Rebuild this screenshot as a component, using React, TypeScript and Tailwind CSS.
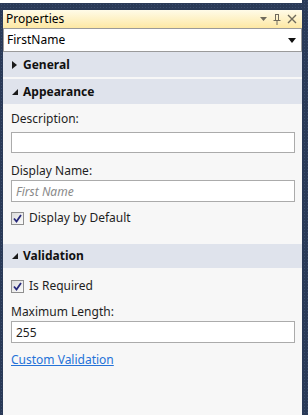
import React from 'react';

const font = { fontFamily: '"Noto Sans", "Open Sans", sans-serif' };

const Check: React.FC = () => (
    <span className="inline-flex h-[13px] w-[13px] items-center justify-center border border-[#8f8f8f] bg-gradient-to-br from-[#dcdcdc] to-[#fbfbfb]">
        <svg width="9" height="9" viewBox="0 0 9 9">
            <path d="M1 4.5 L3.5 7.5 L8 1" fill="none" stroke="#26287a" strokeWidth="1.8" />
        </svg>
    </span>
);

const SectionHeader: React.FC<{ title: string; open?: boolean; h?: string }> = ({ title, open, h = 'h-[25px]' }) => (
    <div className={`flex items-center bg-[#dfe3ec] pl-[6px] ${h}`}>
        <span className="flex w-[11px] items-center justify-center">
            {open ? (
                <svg width="6" height="6" viewBox="0 0 6 6">
                    <path d="M0 6 L6 6 L6 0 Z" fill="#1a1a1a" />
                </svg>
            ) : (
                <svg width="5" height="8" viewBox="0 0 5 8">
                    <path d="M0 0 L5 4 L0 8 Z" fill="#1a1a1a" />
                </svg>
            )}
        </span>
        <span className="ml-[3px] text-[12px] font-bold text-[#111]">{title}</span>
    </div>
);

const App: React.FC = () => {
    const [desc, setDesc] = React.useState('');
    const [displayName, setDisplayName] = React.useState('');
    const [maxLen, setMaxLen] = React.useState('255');

    return (
        <div
            className="flex h-[415px] w-[308px] flex-col bg-[#2a3a57] bg-[radial-gradient(#3a4c6d_1px,transparent_1px)] bg-[length:3px_3px]"
            style={font}
        >
            <div className="h-[3px] w-[302px] bg-white" />

            {/* Properties panel */}
            <div className="ml-[3px] mt-[7px] flex w-[299px] flex-1 flex-col bg-[#f7f7f7]">
                <div className="flex h-[18px] items-center rounded-t-[2px] bg-gradient-to-b from-[#fffbe8] to-[#fde8a3] pl-[3px] pr-[5px]">
                    <span className="text-[12px] text-black">Properties</span>
                    <div className="ml-auto flex items-center gap-[6px]">
                        <svg width="7" height="4" viewBox="0 0 7 4">
                            <path d="M0 0 L7 0 L3.5 4 Z" fill="#6f6a5c" />
                        </svg>
                        <svg width="8" height="11" viewBox="0 0 8 11">
                            <path d="M2 0.5 H6 M2.5 0.5 V6 M5.5 0.5 V6 M0.5 6.5 H7.5 M4 6.5 V11" fill="none" stroke="#6f6a5c" strokeWidth="1" />
                        </svg>
                        <svg width="10" height="10" viewBox="0 0 10 10">
                            <path d="M1 1 L9 9 M9 1 L1 9" stroke="#6f6a5c" strokeWidth="1.4" />
                        </svg>
                    </div>
                </div>

                <div className="flex h-[24px] items-center border border-[#9a9a9a] bg-white pl-[3px] pr-[5px]">
                    <span className="text-[12px] text-black">FirstName</span>
                    <svg className="ml-auto" width="8" height="5" viewBox="0 0 8 5">
                        <path d="M0 0 L8 0 L4 5 Z" fill="#111" />
                    </svg>
                </div>

                <SectionHeader title="General" />
                <div className="h-[2px]" />
                <SectionHeader title="Appearance" open />

                <div className="flex flex-col px-[8px] pt-[7px] text-[12px] text-[#1e1e1e]">
                    <label className="leading-[16px]">Description:</label>
                    <input
                        value={desc}
                        onChange={e => setDesc(e.target.value)}
                        className="mt-[5px] h-[21px] w-[284px] border border-[#ababab] bg-white px-[4px] text-[12px] outline-none"
                    />
                    <label className="mt-[10px] leading-[16px]">Display Name:</label>
                    <input
                        value={displayName}
                        onChange={e => setDisplayName(e.target.value)}
                        placeholder="First Name"
                        className="mt-[1px] h-[22px] w-[284px] border border-[#ababab] bg-white px-[4px] text-[12px] italic outline-none placeholder:text-[#8a8a8a]"
                    />
                    <div className="mt-[8px] flex items-center gap-[5px]">
                        <Check />
                        <span className="leading-[16px]">Display by Default</span>
                    </div>
                </div>

                <div className="h-[18px]" />
                <SectionHeader title="Validation" open h="h-[24px]" />

                <div className="flex flex-col px-[8px] pt-[10px] text-[12px] text-[#1e1e1e]">
                    <div className="flex items-center gap-[5px]">
                        <Check />
                        <span className="leading-[16px]">Is Required</span>
                    </div>
                    <label className="mt-[10px] leading-[16px]">Maximum Length:</label>
                    <input
                        value={maxLen}
                        onChange={e => setMaxLen(e.target.value)}
                        className="mt-[1px] h-[22px] w-[284px] border border-[#ababab] bg-white px-[4px] text-[12px] outline-none"
                    />
                    <a href="#" className="mt-[9px] w-fit leading-[16px] text-[#2472d8] underline">
                        Custom Validation
                    </a>
                </div>
            </div>
        </div>
    );
};

export default App;
